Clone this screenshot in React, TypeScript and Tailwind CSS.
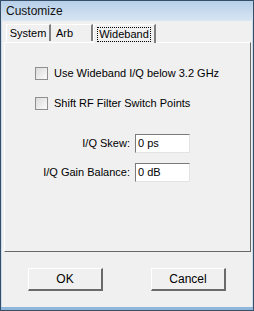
import React from "react";

const font = { fontFamily: '"Liberation Sans", Arial, sans-serif' };

function Checkbox() {
  return (
    <div className="w-[13px] h-[13px] border border-[#8e8f8f] bg-gradient-to-br from-[#dcdcdc] to-[#fbfbfb] shrink-0" />
  );
}

export default function App() {
  return (
    <div
      className="w-[254px] h-[311px] border border-[#364f66] bg-[#c9dcef] flex flex-col text-[11px] leading-[13px] text-black"
      style={font}
    >
      <div className="h-[20px] bg-gradient-to-b from-[#b6cfe9] to-[#d9e6f3] flex items-center pl-[5px] text-[12px] text-[#111]">
        Customize
      </div>
      <div className="flex-1 mx-[1px] bg-[#f0f0f0] flex flex-col">
        <div className="h-[21px] flex items-end pl-[4px] relative">
          <div className="h-[17px] w-[45px] flex items-center justify-center border-l border-t border-white border-r-2 border-r-[#808080] mb-[1px]">
            System
          </div>
          <div className="h-[17px] w-[42px] flex items-center pl-[5px] border-t border-white border-r-2 border-r-[#808080] mb-[1px]">
            Arb
          </div>
          <div className="h-[19px] w-[63px] flex items-center justify-center border-l border-t border-white border-r-2 border-r-[#808080] bg-[#f0f0f0] relative top-[1px] z-10">
            <span className="border border-dotted border-black px-[1px] leading-[13px]">Wideband</span>
          </div>
        </div>
        <div className="h-[210px] ml-[2px] mr-[1px] border-t border-l border-white border-r border-b border-r-[#696969] border-b-[#696969] flex flex-col">
          <div className="flex items-center mt-[24px] ml-[30px] gap-[6px]">
            <Checkbox />
            <span>Use Wideband I/Q below 3.2 GHz</span>
          </div>
          <div className="flex items-center mt-[17px] ml-[30px] gap-[6px]">
            <Checkbox />
            <span>Shift RF Filter Switch Points</span>
          </div>
          <div className="flex items-center mt-[24px]">
            <span className="w-[125px] text-right">I/Q Skew:</span>
            <div className="ml-[5px] w-[55px] h-[19px] border border-[#7a7a7a] border-r-[#e3e3e3] border-b-[#e3e3e3] bg-white flex items-center pl-[2px]">
              0 ps
            </div>
          </div>
          <div className="flex items-center mt-[10px]">
            <span className="w-[125px] text-right">I/Q Gain Balance:</span>
            <div className="ml-[5px] w-[55px] h-[19px] border border-[#7a7a7a] border-r-[#e3e3e3] border-b-[#e3e3e3] bg-white flex items-center pl-[2px]">
              0 dB
            </div>
          </div>
        </div>
        <div className="flex-1 flex items-start pt-[16px]">
          <div className="ml-[26px] w-[75px] h-[23px] border-l border-t border-white border-r-2 border-b-2 border-r-[#6a6a6a] border-b-[#6a6a6a] flex items-center justify-center text-[12px]">
            OK
          </div>
          <div className="ml-[48px] w-[75px] h-[23px] border-l border-t border-white border-r-2 border-b-2 border-r-[#6a6a6a] border-b-[#6a6a6a] flex items-center justify-center text-[12px]">
            Cancel
          </div>
        </div>
        <div className="h-[4px] bg-[#f0f0f0]" />
      </div>
      <div className="h-[3px] bg-[#8fb7dc]" />
    </div>
  );
}
